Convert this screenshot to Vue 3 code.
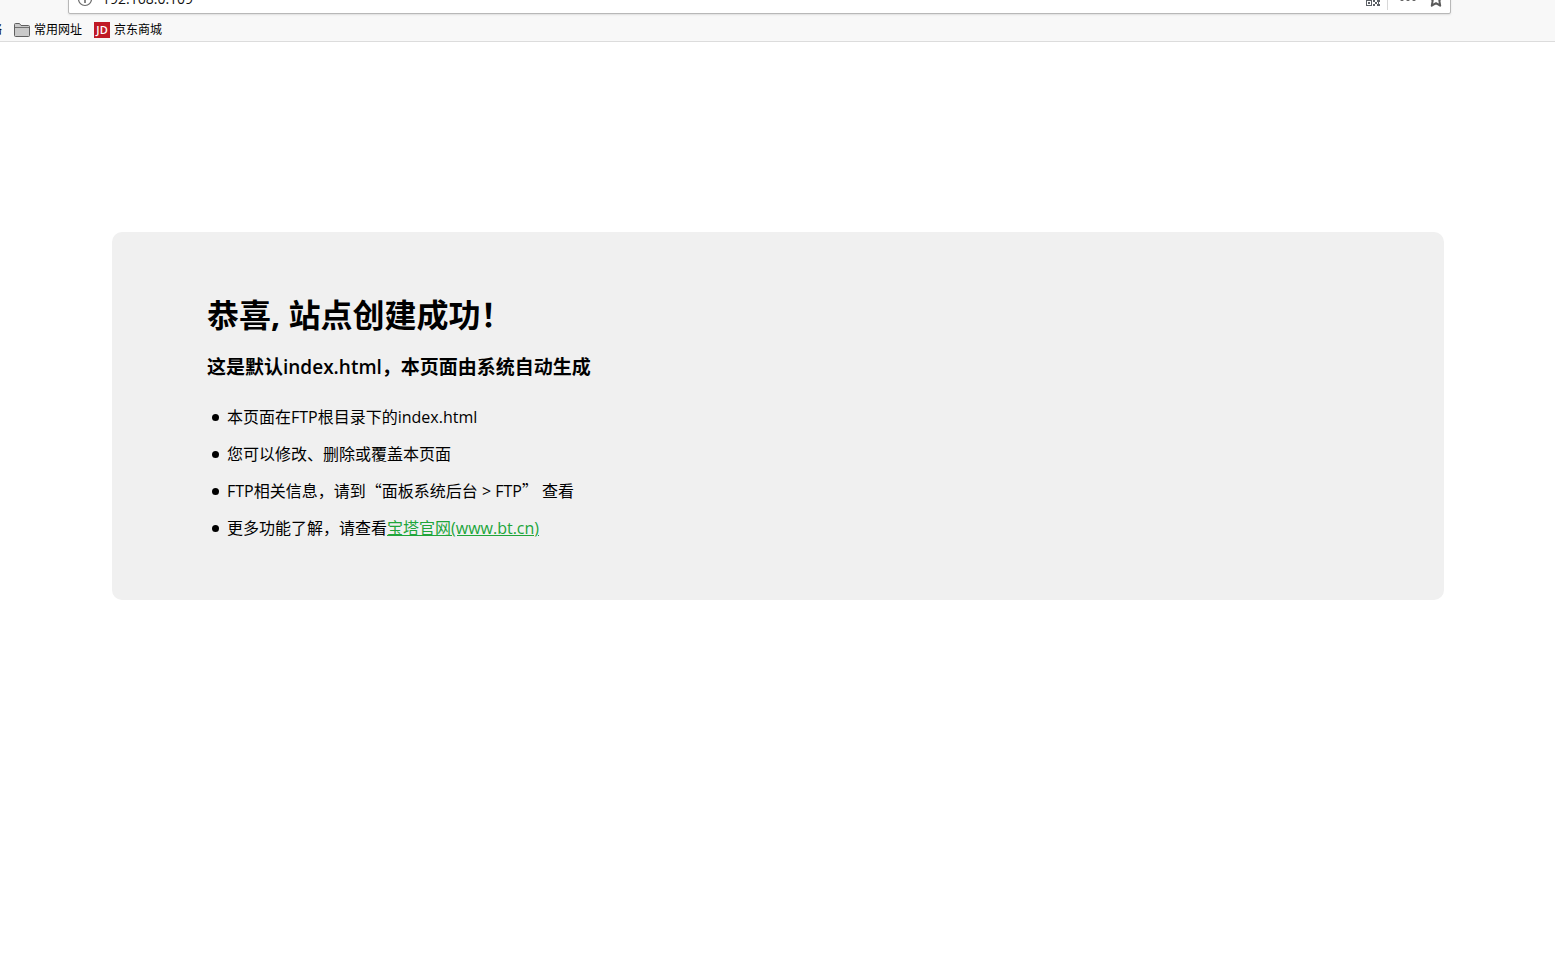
<script setup>
import { ref } from 'vue'

const address = ref('192.168.0.109')
</script>

<template>
  <header class="chrome">
    <div class="address-bar">
      <svg class="info" viewBox="0 0 16 16" aria-hidden="true">
        <circle cx="8" cy="8" r="6.5" fill="none" stroke="#6a6a6a" stroke-width="1.2" />
        <path d="M8 7v5M8 4v1.6" stroke="#6a6a6a" stroke-width="1.6" />
      </svg>
      <input v-model="address" class="address" type="text" aria-label="地址" />
      <button class="tool qr" type="button" aria-label="二维码">
        <svg viewBox="0 0 14 14" shape-rendering="crispEdges">
          <path
            d="M0 0h6v6H0zM8 0h6v6H8zM0 8h6v6H0z M1 1v4h4V1zM9 1v4h4V1zM1 9v4h4V9z M2 2h2v2H2zM10 2h2v2h-2zM2 10h2v2H2z M7 8h2v2H7zM11 8h3v2h-3zM9 10h2v2H9zM12 10h1v2h-1zM7 12h2v2H7zM11 12h3v2h-3z"
            fill="#5c6066"
            fill-rule="evenodd"
          />
        </svg>
      </button>
      <span class="divider"></span>
      <button class="tool more" type="button" aria-label="更多">
        <svg viewBox="0 0 16 16">
          <g fill="#5a5a5a">
            <circle cx="2" cy="8" r="2" />
            <circle cx="8" cy="8" r="2" />
            <circle cx="14" cy="8" r="2" />
          </g>
        </svg>
      </button>
      <button class="tool star" type="button" aria-label="收藏">
        <svg viewBox="0 0 16 16">
          <path
            d="M8 1.500l2 4.200 4.500.6-3.200 3.100.9 5.300L8 12.200l-4.200 2.500.9-5.300L1.500 6.300 6 5.700z"
            fill="none"
            stroke="#5a5a5a"
            stroke-width="2"
            stroke-linejoin="round"
          />
        </svg>
      </button>
    </div>
    <nav class="bookmarks">
      <a class="bookmark clipped" href="#">网络</a>
      <a class="bookmark" href="#">
        <svg viewBox="0 0 16 16" aria-hidden="true">
          <path d="M.5 13.500v-11q0-1 1-1h4l1.500 2h7.500q1 0 1 1v9q0 1-1 1h-13q-1 0-1-1z" fill="#c9c9c9" stroke="#606060" />
          <path d="M1 5.500h14" stroke="#707070" />
        </svg>
        常用网址
      </a>
      <a class="bookmark" href="#">
        <span class="jd">JD</span>
        京东商城
      </a>
    </nav>
  </header>
  <main class="panel">
    <h1>恭喜, 站点创建成功！</h1>
    <h3>这是默认index.html，本页面由系统自动生成</h3>
    <ul>
      <li>本页面在FTP根目录下的index.html</li>
      <li>您可以修改、删除或覆盖本页面</li>
      <li>FTP相关信息，请到<span class="quote">“</span>面板系统后台 &gt; FTP<span class="quote">”</span> 查看</li>
      <li>更多功能了解，请查看<a href="#">宝塔官网(www.bt.cn)</a></li>
    </ul>
  </main>
</template>

<style>
body {
  background: #fff;
  color: #000;
  font-family: "Open Sans", "Noto Sans CJK SC", sans-serif;
  font-size: 16px;
}
</style>

<style scoped>
.chrome {
  display: flex;
  flex-direction: column;
  justify-content: flex-end;
  height: 41px;
  overflow: hidden;
  background: #f8f8f8;
  border-bottom: 1px solid #dcdcdc;
}
.address-bar {
  display: flex;
  flex-shrink: 0;
  align-items: center;
  box-sizing: border-box;
  height: 30px;
  margin: 0 104px 0 68px;
  padding: 0 6px 0 8px;
  background: #fff;
  border: 1px solid #b8b8b8;
  border-radius: 2px;
  box-shadow: 0 1px 2px #0000001a;
}
.info {
  flex: none;
  width: 16px;
  height: 16px;
}
.address {
  flex: 1;
  min-width: 0;
  margin-left: 9px;
  padding: 0;
  border: 0;
  outline: 0;
  background: none;
  color: #111;
  font: 14px/20px "Open Sans", sans-serif;
}
.tool {
  display: flex;
  flex: none;
  width: 16px;
  padding: 0;
  border: 0;
  background: none;
}
.tool svg {
  width: 100%;
}
.qr {
  width: 14px;
}
.divider {
  width: 1px;
  height: 22px;
  margin: 0 12px 0 7px;
  background: #d8d8d8;
}
.star {
  margin-left: 12px;
}
.bookmarks {
  display: flex;
  flex-shrink: 0;
  align-items: center;
  gap: 12px;
  box-sizing: border-box;
  height: 27px;
  padding-top: 4px;
}
.bookmark {
  display: flex;
  align-items: center;
  gap: 4px;
  color: #000;
  font-size: 12px;
  line-height: 16px;
  text-decoration: none;
  white-space: nowrap;
}
.bookmark svg {
  width: 16px;
  height: 16px;
}
.clipped {
  margin-left: -22px;
}
.jd {
  width: 16px;
  background: #c01a26;
  color: #fff;
  font-size: 11px;
  font-weight: 600;
  text-align: center;
}
.panel {
  margin: 190px 111px 0 112px;
  padding: 38px 95px;
  background: #f0f0f0;
  border-radius: 10px;
}
h1 {
  margin: 23px 0 18px;
  font-size: 32px;
  line-height: 44px;
}
h3 {
  margin: 18px 0 20px;
  font-size: 19px;
  font-weight: 600;
  line-height: 24px;
}
ul {
  margin: 20px 0 15px;
  padding-left: 20px;
  list-style: none;
}
li {
  line-height: 37px;
}
li::before {
  content: "";
  display: inline-block;
  width: 7px;
  height: 7px;
  margin: 0 8px 0 -15px;
  border-radius: 50%;
  background: #000;
  vertical-align: 2px;
}
li a {
  color: #20a53a;
}
.quote {
  font-family: "Noto Sans CJK SC", sans-serif;
  line-height: 1;
}
</style>
